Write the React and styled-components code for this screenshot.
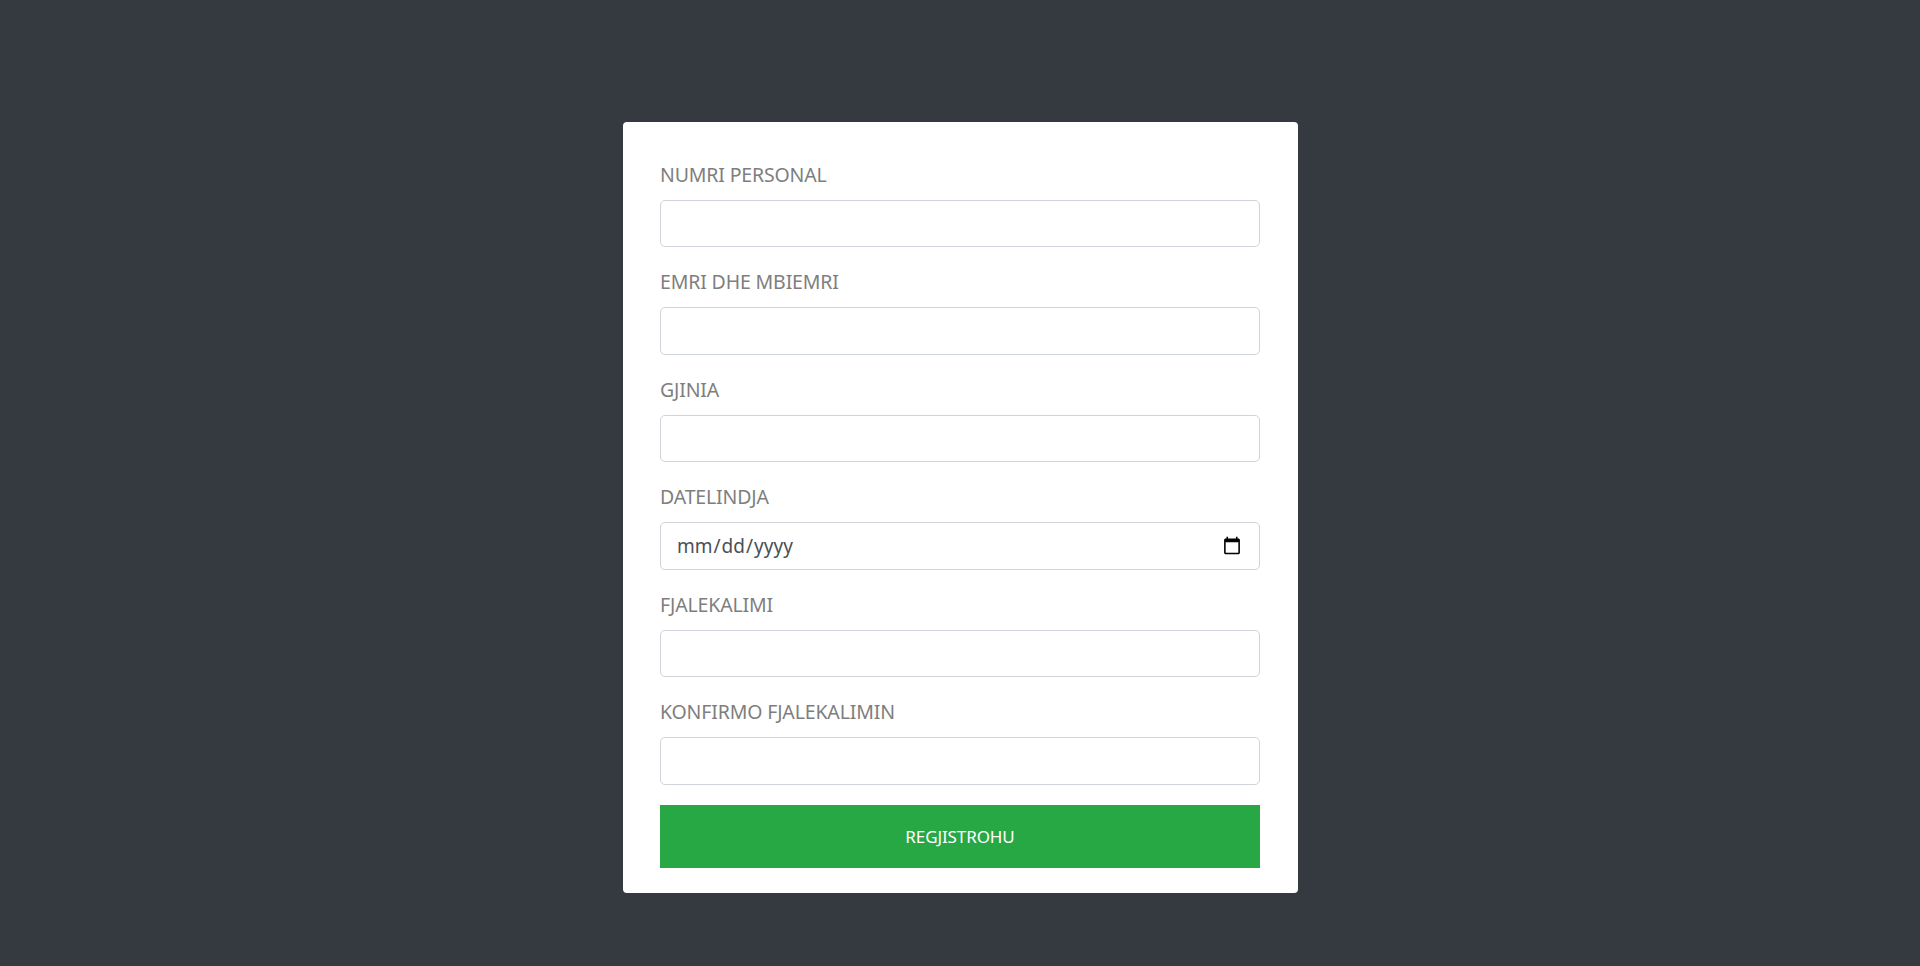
import React from "react";
import styled, { createGlobalStyle } from "styled-components";

const Global = createGlobalStyle`
  html, body { margin: 0; padding: 0; }
  body {
    background: #343a40;
    font-family: "Noto Sans", "Open Sans", sans-serif;
    min-height: 966px;
  }
  * { box-sizing: border-box; }
`;

const Page = styled.div`
  display: flex;
  justify-content: center;
  padding-top: 122px;
`;

const Card = styled.form`
  width: 675px;
  background: #ffffff;
  border-radius: 4px;
  padding: 37.5px 37.5px 25.5px;
  display: flex;
  flex-direction: column;
`;

const Group = styled.div`
  display: flex;
  flex-direction: column;
  margin-bottom: 20px;
`;

const Label = styled.label`
  font-size: 19.5px;
  line-height: 30px;
  color: #7e7e7e;
  margin-bottom: 10px;
  letter-spacing: -0.15px;
`;

const Input = styled.input`
  height: 47.5px;
  width: 100%;
  border: 1.25px solid #ced4da;
  border-radius: 5px;
  padding: 0 15px;
  font-family: "Noto Sans", "Open Sans", sans-serif;
  font-size: 19px;
  color: #495057;
  background: #fff;
  outline: none;
  &::-webkit-calendar-picker-indicator {
    width: 20px;
    height: 20px;
    margin-right: 0;
  }
`;

const Button = styled.button`
  height: 63px;
  width: 100%;
  border: none;
  border-radius: 0;
  background: #28a745;
  color: #ffffff;
  font-family: "Noto Sans", "Open Sans", sans-serif;
  font-size: 17px;
  letter-spacing: -0.1px;
  cursor: pointer;
`;

const fields = [
  { label: "NUMRI PERSONAL", type: "text" },
  { label: "EMRI DHE MBIEMRI", type: "text" },
  { label: "GJINIA", type: "text" },
  { label: "DATELINDJA", type: "date" },
  { label: "FJALEKALIMI", type: "password" },
  { label: "KONFIRMO FJALEKALIMIN", type: "password" },
];

export default function App() {
  return (
    <>
      <Global />
      <Page>
        <Card onSubmit={(e) => e.preventDefault()}>
          {fields.map((f, i) => (
            <Group key={i}>
              <Label htmlFor={`f${i}`}>{f.label}</Label>
              <Input id={`f${i}`} type={f.type} />
            </Group>
          ))}
          <Button type="submit">REGJISTROHU</Button>
        </Card>
      </Page>
    </>
  );
}
